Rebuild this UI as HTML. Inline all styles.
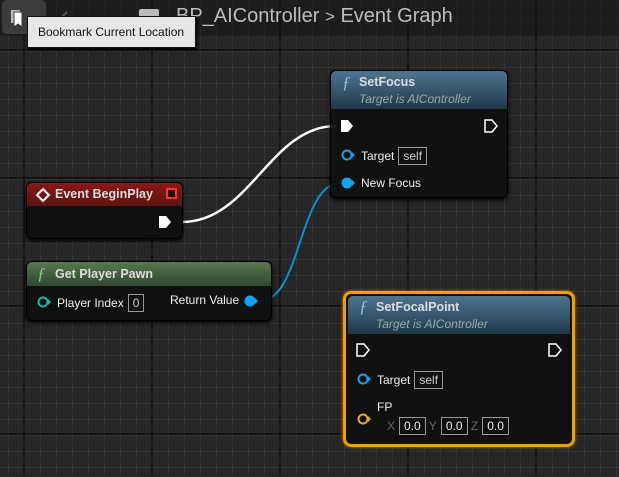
<!DOCTYPE html>
<html><head><style>
*{margin:0;padding:0;box-sizing:border-box}
body{width:619px;height:477px;overflow:hidden;position:relative;font-family:"Liberation Sans",sans-serif;
background-color:#262626;
background-image:
linear-gradient(90deg,#141414 2px,transparent 2px),
linear-gradient(0deg,#141414 2px,transparent 2px),
linear-gradient(90deg,#343434 1px,transparent 1px),
linear-gradient(0deg,#343434 1px,transparent 1px);
background-size:128px 128px,128px 128px,16px 16px,16px 16px;
background-position:23px 51px,23px 51px,8px 4px,8px 4px;}
.top{position:absolute;left:0;top:0;width:619px;height:36px;background:rgba(20,20,20,.55)}
.bm{position:absolute;left:2px;top:0;width:44px;height:34px;background:#3c3c3c;border-radius:5px}
.crumb{position:absolute;left:176px;top:5px;font-size:20px;color:#bdbdbd}
.tip{position:absolute;left:27px;top:16px;width:169px;height:32px;background:#e6e6e6;border:1px solid #111;box-shadow:1px 2px 2px #000;font-size:12px;color:#111;padding:8px 0 0 10px}
.node{position:absolute;background:rgba(14,16,15,.94);border-radius:6px;border:1px solid #000;box-shadow:0 2px 4px #000;color:#eee;font-size:12px}
.hd{position:absolute;left:0;top:0;right:0;border-radius:5px 5px 0 0;font-weight:bold;color:#ddd;font-size:12.5px}
.pin{position:absolute}
.lbl{position:absolute;font-size:12px;color:#eee;white-space:nowrap}
.box{display:inline-block;border:1px solid #999;padding:0 4px;line-height:16px;margin-left:4px;color:#ccc}
.f{font-family:"Liberation Serif",serif;font-style:italic;color:#8bc4ee;font-weight:normal;font-size:17px}
.sub{font-style:italic;font-weight:normal;color:#9aa;font-size:12px}
</style></head><body>
<svg width="619" height="477" style="position:absolute;left:0;top:0">
<path d="M182 222 C250 222 270 126 336 126" stroke="#fff" stroke-width="2.5" fill="none"/>
<path d="M262 300 C300 300 300 183 340 183" stroke="#0a8fd6" stroke-width="2" fill="none"/>
</svg>
<div class="top"></div>
<div class="bm"><svg width="44" height="34"><rect x="9" y="10" width="9" height="13" fill="#bbb"/><path d="M12 12h8v15l-4-3-4 3z" fill="#fff" stroke="#3c3c3c"/></svg></div>
<svg style="position:absolute;left:50px;top:6px" width="120" height="22"><path d="M12 11h14M12 11l5-5M12 11l5 5" stroke="#555" stroke-width="2" fill="none"/><path d="M98 11h-14M98 11l-5-5M98 11l5 5" stroke="#555" stroke-width="2" fill="none"/></svg>
<div style="position:absolute;left:139px;top:9px;width:20px;height:14px;background:#bbb;border-radius:2px"></div>
<div class="crumb">BP_AIController <span style="font-size:17px">&gt;</span> Event Graph</div>
<div class="tip">Bookmark Current Location</div>

<!-- SetFocus -->
<div class="node" style="left:330px;top:70px;width:178px;height:128px">
<div class="hd" style="height:38px;background:linear-gradient(180deg,#4e7590,#2d4b60 70%,#223544)">
<span class="f" style="position:absolute;left:11px;top:2px">ƒ</span>
<span style="position:absolute;left:28px;top:4px">SetFocus</span>
<span class="sub" style="position:absolute;left:28px;top:21px">Target is AIController</span></div>
</div>
<svg class="pin" style="left:338px;top:117px" width="170" height="75">
<path d="M3 3h7l5 6-5 6H3z" fill="#fff"/>
<path d="M147 3h7l5 6-5 6h-7z" fill="none" stroke="#fff" stroke-width="1.5"/>
<circle cx="9" cy="38" r="4.5" fill="none" stroke="#1aa0e8" stroke-width="2"/><path d="M14 35l3 3-3 3z" fill="#1aa0e8"/>
<circle cx="9" cy="66" r="5.5" fill="#0fa3f0"/><path d="M14 63l3 3-3 3z" fill="#0fa3f0"/>
</svg>
<div class="lbl" style="left:361px;top:147px">Target<span class="box">self</span></div>
<div class="lbl" style="left:361px;top:176px">New Focus</div>

<!-- Event BeginPlay -->
<div class="node" style="left:26px;top:182px;width:157px;height:57px">
<div class="hd" style="height:23px;background:linear-gradient(180deg,#8a1818,#5a1212)">
<svg style="position:absolute;left:8px;top:4px" width="16" height="16"><path d="M8 2l6 6-6 6-6-6z" fill="none" stroke="#fff" stroke-width="2"/></svg>
<span style="position:absolute;left:28px;top:4px">Event BeginPlay</span>
<div style="position:absolute;left:139px;top:5px;width:11px;height:11px;border:2px solid #f33;background:#200"></div></div>
</div>
<svg class="pin" style="left:157px;top:214px" width="20" height="18"><path d="M2 2h7l5 6-5 6H2z" fill="#fff"/></svg>

<!-- Get Player Pawn -->
<div class="node" style="left:26px;top:261px;width:246px;height:60px">
<div class="hd" style="height:24px;background:linear-gradient(180deg,#57784f,#2f4830)">
<span class="f" style="position:absolute;left:10px;top:2px;color:#8c8">ƒ</span>
<span style="position:absolute;left:28px;top:5px">Get Player Pawn</span></div>
</div>
<svg class="pin" style="left:34px;top:293px" width="240" height="18">
<circle cx="9" cy="9" r="4.5" fill="none" stroke="#1db6a0" stroke-width="2"/><path d="M14 6l3 3-3 3z" fill="#1db6a0"/>
<circle cx="216" cy="8" r="5.5" fill="#0fa3f0"/><path d="M221 5l3 3-3 3z" fill="#0fa3f0"/>
</svg>
<div class="lbl" style="left:57px;top:294px">Player Index<span class="box">0</span></div>
<div class="lbl" style="left:170px;top:293px">Return Value</div>

<!-- SetFocalPoint -->
<div class="node" style="left:343px;top:291px;width:232px;height:156px;border:3px solid #f0a000;border-radius:8px;box-shadow:0 0 3px #c70">
<div class="hd" style="left:2px;right:2px;top:2px;height:38px;background:linear-gradient(180deg,#4e7590,#2d4b60 70%,#223544)">
<span class="f" style="position:absolute;left:11px;top:1px">ƒ</span>
<span style="position:absolute;left:28px;top:4px">SetFocalPoint</span>
<span class="sub" style="position:absolute;left:28px;top:21px">Target is AIController</span></div>
</div>
<svg class="pin" style="left:354px;top:341px" width="215" height="90">
<path d="M3 3h7l5 6-5 6H3z" fill="none" stroke="#fff" stroke-width="1.5"/>
<path d="M195 3h7l5 6-5 6h-7z" fill="none" stroke="#fff" stroke-width="1.5"/>
<circle cx="9" cy="38" r="4.5" fill="none" stroke="#1aa0e8" stroke-width="2"/><path d="M14 35l3 3-3 3z" fill="#1aa0e8"/>
<circle cx="9" cy="78" r="4.5" fill="none" stroke="#e0b020" stroke-width="2"/><path d="M14 75l3 3-3 3z" fill="#e0b020"/>
</svg>
<div class="lbl" style="left:377px;top:371px">Target<span class="box">self</span></div>
<div class="lbl" style="left:377px;top:400px">FP</div>
<div class="lbl" style="left:387px;top:417px;color:#666">X<span class="box" style="color:#eee">0.0</span> Y<span class="box" style="color:#eee">0.0</span> Z<span class="box" style="color:#eee">0.0</span></div>
</body></html>
